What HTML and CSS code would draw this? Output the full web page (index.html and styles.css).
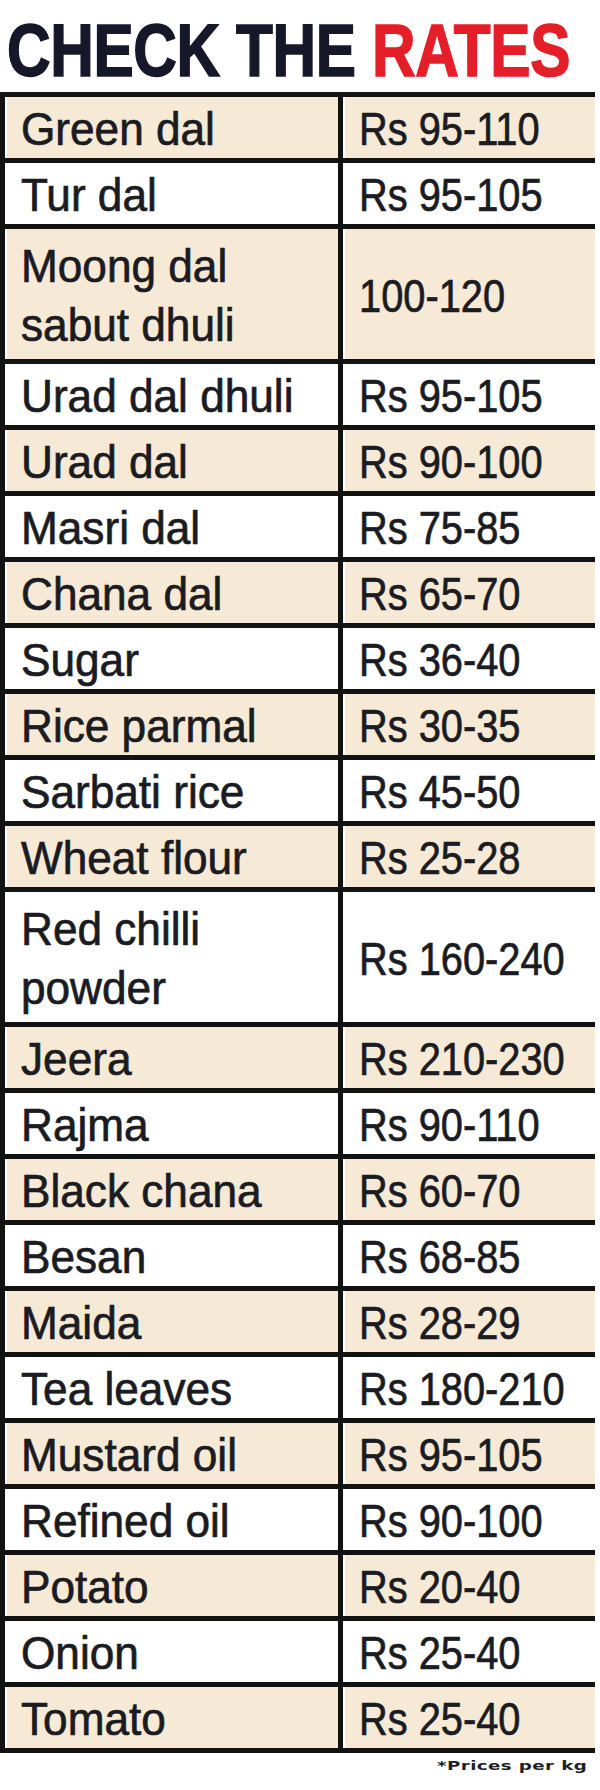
FILE: index.html
```html
<!DOCTYPE html>
<html lang="en">
<head>
<meta charset="utf-8">
<title>Check the rates</title>
<link rel="stylesheet" href="styles.css">
</head>
<body>
<div class="card">
  <h1 class="title"><span class="title-text">CHECK THE <span class="accent">RATES</span></span></h1>
  <div class="rates">
    <div class="row alt"><div class="item"><span class="txt">Green dal</span></div><div class="price"><span class="txt">Rs 95-110</span></div></div>
    <div class="row"><div class="item"><span class="txt">Tur dal</span></div><div class="price"><span class="txt">Rs 95-105</span></div></div>
    <div class="row alt tall"><div class="item"><span class="txt">Moong dal<br>sabut dhuli</span></div><div class="price"><span class="txt">100-120</span></div></div>
    <div class="row"><div class="item"><span class="txt">Urad dal dhuli</span></div><div class="price"><span class="txt">Rs 95-105</span></div></div>
    <div class="row alt"><div class="item"><span class="txt">Urad dal</span></div><div class="price"><span class="txt">Rs 90-100</span></div></div>
    <div class="row"><div class="item"><span class="txt">Masri dal</span></div><div class="price"><span class="txt">Rs 75-85</span></div></div>
    <div class="row alt"><div class="item"><span class="txt">Chana dal</span></div><div class="price"><span class="txt">Rs 65-70</span></div></div>
    <div class="row"><div class="item"><span class="txt">Sugar</span></div><div class="price"><span class="txt">Rs 36-40</span></div></div>
    <div class="row alt"><div class="item"><span class="txt">Rice parmal</span></div><div class="price"><span class="txt">Rs 30-35</span></div></div>
    <div class="row"><div class="item"><span class="txt">Sarbati rice</span></div><div class="price"><span class="txt">Rs 45-50</span></div></div>
    <div class="row alt"><div class="item"><span class="txt">Wheat flour</span></div><div class="price"><span class="txt">Rs 25-28</span></div></div>
    <div class="row tall"><div class="item"><span class="txt">Red chilli<br>powder</span></div><div class="price"><span class="txt">Rs 160-240</span></div></div>
    <div class="row alt"><div class="item"><span class="txt">Jeera</span></div><div class="price"><span class="txt">Rs 210-230</span></div></div>
    <div class="row"><div class="item"><span class="txt">Rajma</span></div><div class="price"><span class="txt">Rs 90-110</span></div></div>
    <div class="row alt"><div class="item"><span class="txt">Black chana</span></div><div class="price"><span class="txt">Rs 60-70</span></div></div>
    <div class="row"><div class="item"><span class="txt">Besan</span></div><div class="price"><span class="txt">Rs 68-85</span></div></div>
    <div class="row alt"><div class="item"><span class="txt">Maida</span></div><div class="price"><span class="txt">Rs 28-29</span></div></div>
    <div class="row"><div class="item"><span class="txt">Tea leaves</span></div><div class="price"><span class="txt">Rs 180-210</span></div></div>
    <div class="row alt"><div class="item"><span class="txt">Mustard oil</span></div><div class="price"><span class="txt">Rs 95-105</span></div></div>
    <div class="row"><div class="item"><span class="txt">Refined oil</span></div><div class="price"><span class="txt">Rs 90-100</span></div></div>
    <div class="row alt"><div class="item"><span class="txt">Potato</span></div><div class="price"><span class="txt">Rs 20-40</span></div></div>
    <div class="row"><div class="item"><span class="txt">Onion</span></div><div class="price"><span class="txt">Rs 25-40</span></div></div>
    <div class="row alt"><div class="item"><span class="txt">Tomato</span></div><div class="price"><span class="txt">Rs 25-40</span></div></div>
  </div>
  <div class="note"><span class="note-text">*Prices per kg</span></div>
</div>
</body>
</html>
```
FILE: styles.css
```css
html, body {
  margin: 0;
  padding: 0;
  background: #ffffff;
}

.card {
  width: 600px;
  overflow: hidden;
  font-family: "Liberation Sans", Arial, sans-serif;
  color: #1b1b22;
}

.title {
  margin: 0;
  padding: 8px 0 0 7px;
  height: 84px;
  overflow: hidden;
  font-size: 75px;
  line-height: 84px;
  font-weight: 700;
  color: #17172a;
  white-space: nowrap;
}

.title-text {
  display: inline-block;
  letter-spacing: -0.5px;
  -webkit-text-stroke: 1.6px #17172a;
  transform: scaleX(0.805);
  transform-origin: left center;
}

.title .accent {
  color: #e41f2a;
  -webkit-text-stroke: 1.6px #e41f2a;
}

.rates {
  width: 590px;
  border-top: 5px solid #121212;
  border-left: 5px solid #121212;
}

.row {
  display: flex;
  height: 66px;
  box-sizing: border-box;
  border-bottom: 5px solid #121212;
  background: #ffffff;
}

.row.tall {
  height: 135px;
}

.item,
.price {
  display: flex;
  align-items: center;
  box-sizing: border-box;
  padding-top: 4px;
  border-left: 2px solid #ffffff;
  font-size: 46px;
  line-height: 59px;
  white-space: nowrap;
  overflow: hidden;
}

.item {
  flex: none;
  width: 338px;
  padding-left: 14px;
  border-right: 5px solid #121212;
}

.price {
  flex: 1;
  min-width: 0;
  padding-left: 14px;
}

.txt {
  display: inline-block;
  -webkit-text-stroke: 0.7px #1b1b22;
  transform-origin: left center;
}

.item .txt {
  transform: scaleX(0.96);
}

.price .txt {
  transform: scaleX(0.865);
}

.row.alt .item,
.row.alt .price {
  background: #f6e9d5;
}

.note {
  text-align: right;
  padding: 3px 13px 0 0;
  height: 30px;
}

.note-text {
  display: inline-block;
  font-family: "DejaVu Sans", "Liberation Sans", sans-serif;
  font-weight: 700;
  font-size: 13px;
  line-height: 16px;
  letter-spacing: 0.3px;
  color: #1e1e28;
  transform: scaleX(1.4);
  transform-origin: right center;
}
```
